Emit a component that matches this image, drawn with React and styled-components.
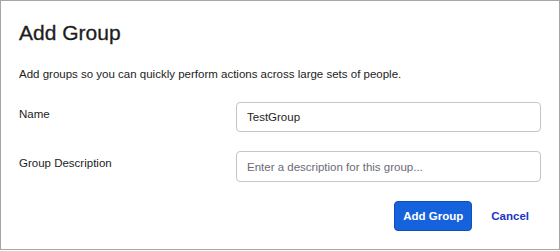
import React from "react";
import styled, { createGlobalStyle } from "styled-components";

const Global = createGlobalStyle`
  html, body { margin: 0; padding: 0; background: #ffffff; }
  body { font-family: "Liberation Sans", Arial, sans-serif; }
  * { box-sizing: border-box; }
`;

const Dialog = styled.div`
  width: 560px;
  height: 250px;
  border: 1px solid #a6a6a6;
  background: #fff;
  padding: 19px 18px 0 18px;
  display: flex;
  flex-direction: column;
  color: #1d1d21;
`;

const Title = styled.h1`
  margin: 0;
  font-size: 21px;
  line-height: 26px;
  font-weight: 400;
  -webkit-text-stroke: 0.3px #1d1d21;
`;

const Intro = styled.p`
  margin: 20px 0 0 0;
  font-size: 11.5px;
  line-height: 16px;
  color: #1d1d21;
`;

const Form = styled.div`
  margin-top: 20px;
  display: grid;
  grid-template-columns: 217px 305px;
  row-gap: 19px;
`;

const Label = styled.label`
  font-size: 11.5px;
  line-height: 16px;
  padding-top: 4px;
`;

const Input = styled.input`
  width: 305px;
  height: ${p => (p.$tall ? "31px" : "30px")};
  border: 1px solid #c4c4cc;
  border-radius: 4px;
  padding: 0 10px;
  font-family: inherit;
  font-size: 11.5px;
  color: #1d1d21;
  outline: none;
  &::placeholder { color: #6b6b75; }
`;

const Actions = styled.div`
  margin-top: 19px;
  display: flex;
  justify-content: flex-end;
  align-items: center;
  gap: 8px;
  padding-right: 1px;
`;

const Button = styled.button`
  height: 30px;
  border-radius: 4px;
  font-family: inherit;
  font-size: 11.5px;
  font-weight: 700;
  white-space: nowrap;
  cursor: pointer;
  padding: 0 ${p => (p.$primary ? "0" : "10px")};
  width: ${p => (p.$primary ? "78px" : "auto")};
  background: ${p => (p.$primary ? "#1662dd" : "transparent")};
  color: ${p => (p.$primary ? "#ffffff" : "#1a35c4")};
  border: 1px solid ${p => (p.$primary ? "#0f4fc0" : "transparent")};
`;

export default function App() {
  return (
    <>
      <Global />
      <Dialog>
        <Title>Add Group</Title>
        <Intro>Add groups so you can quickly perform actions across large sets of people.</Intro>
        <Form>
          <Label>Name</Label>
          <Input defaultValue="TestGroup" />
          <Label>Group Description</Label>
          <Input $tall placeholder="Enter a description for this group..." />
        </Form>
        <Actions>
          <Button $primary>Add Group</Button>
          <Button>Cancel</Button>
        </Actions>
      </Dialog>
    </>
  );
}
